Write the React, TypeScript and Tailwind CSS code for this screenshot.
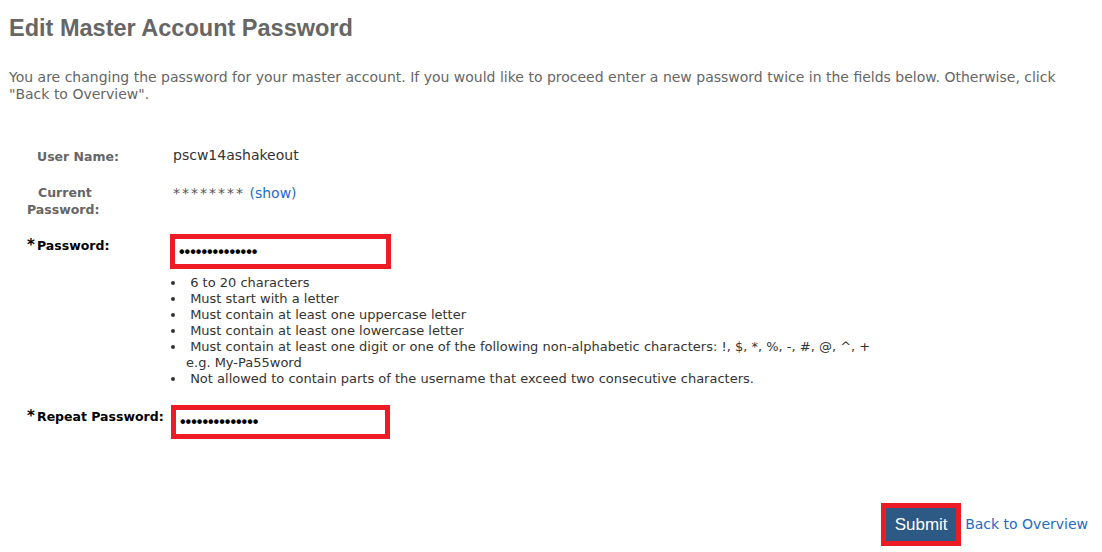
const verdana = "font-['Verdana','DejaVu_Sans',sans-serif]";

const rules = [
  "6 to 20 characters",
  "Must start with a letter",
  "Must contain at least one uppercase letter",
  "Must contain at least one lowercase letter",
];

const PasswordBox = ({ className = "" }: { className?: string }) => (
  <div className={`border-[5px] border-[#ed1c24] bg-white flex items-center pl-[4px] ${className}`}>
    <span className="font-['Liberation_Sans',Arial,sans-serif] font-bold text-[16px] leading-none text-black">
      ••••••••••••••
    </span>
  </div>
);

export default function App() {
  return (
    <div className={`${verdana} bg-white min-h-[552px] w-[1102px] px-[9px] text-[#666]`}>
      {/* Header */}
      <h1 className="font-['Liberation_Sans',Arial,sans-serif] font-bold text-[23.5px] leading-[28px] pt-[14px] text-[#666]">
        Edit Master Account Password
      </h1>
      <p className="mt-[27px] text-[14px] leading-[17px] text-[#666]">
        You are changing the password for your master account. If you would like to proceed enter a new password twice in the fields below. Otherwise, click
        <br />
        "Back to Overview".
      </p>

      {/* Form */}
      <div className="mt-[44px] pl-[18px]">
        <div className="flex">
          <div className="w-[143px] pl-[10px] text-[12.5px] font-bold leading-[17px] pt-[1px]">User Name:</div>
          <div className="text-[14px] leading-[17px] text-[#333] pl-[3px]">pscw14ashakeout</div>
        </div>

        <div className="flex mt-[19px]">
          <div className="w-[143px] text-[12.5px] font-bold leading-[17px]">
            <div className="pl-[11px]">Current</div>
            <div>Password:</div>
          </div>
          <div className="text-[14px] leading-[17px] text-[#555] pl-[3px] pt-[1px]">
            <span className="tracking-[2px]">********</span> <span className="text-[#1e6bc5]">(show)</span>
          </div>
        </div>

        <div className="flex mt-[16px]">
          <div className="w-[143px] text-[12.5px] font-bold leading-[17px] text-black pt-[3px]">
            <span className="inline-block w-[10px] text-[15px] leading-none">*</span>Password:
          </div>
          <PasswordBox className="w-[221px] h-[35px]" />
        </div>

        <ul className="mt-[6px] ml-[143px] pl-[16px] list-disc text-[13px] leading-[16px] text-[#333]">
          {rules.map((r) => (
            <li key={r}>{"\u00a0"}{r}</li>
          ))}
          <li>
            {"\u00a0"}Must contain at least one digit or one of the following non-alphabetic characters: !, $, *, %, -, #, @, ^, +
            <br />
            e.g. My-Pa55word
          </li>
          <li>{"\u00a0"}Not allowed to contain parts of the username that exceed two consecutive characters.</li>
        </ul>

        <div className="flex mt-[18px]">
          <div className="w-[144px] text-[12.5px] font-bold leading-[17px] text-black pt-[3px]">
            <span className="inline-block w-[10px] text-[15px] leading-none">*</span>Repeat Password:
          </div>
          <PasswordBox className="w-[219px] h-[34px]" />
        </div>
      </div>

      {/* Actions */}
      <div className="mt-[64px] flex items-center justify-end pr-[5px]">
        <div className="border-[5px] border-[#ed1c24]">
          <button className="bg-[#2d5a84] text-white font-['Liberation_Sans',Arial,sans-serif] text-[17px] leading-[33px] w-[70px] h-[33px]">
            Submit
          </button>
        </div>
        <span className="ml-[4px] text-[14px] text-[#1e6bc5]">Back to Overview</span>
      </div>
    </div>
  );
}
